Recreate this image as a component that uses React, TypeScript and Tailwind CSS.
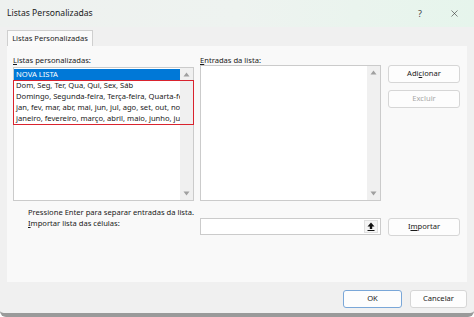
import { X } from "lucide-react";

const lists = [
  "Dom, Seg, Ter, Qua, Qui, Sex, Sáb",
  "Domingo, Segunda-feira, Terça-feira, Quarta-feira, Quinta-feira, Sexta-feira, Sábado",
  "jan, fev, mar, abr, mai, jun, jul, ago, set, out, nov, dez",
  "janeiro, fevereiro, março, abril, maio, junho, julho, agosto",
];

const ScrollBar = () => (
  <div className="flex w-[13px] shrink-0 flex-col items-center justify-between bg-[#f0f0f0] py-[4px]">
    <svg width="7" height="5" viewBox="0 0 7 5">
      <path d="M3.5 0.5 L6.5 4.5 L0.5 4.5 Z" fill="#a0a0a0" />
    </svg>
    <svg width="7" height="5" viewBox="0 0 7 5">
      <path d="M0.5 0.5 L6.5 0.5 L3.5 4.5 Z" fill="#a0a0a0" />
    </svg>
  </div>
);

const Btn = ({ children, disabled, primary }: { children: React.ReactNode; disabled?: boolean; primary?: boolean }) => (
  <div
    className={`flex h-[18px] items-center justify-center rounded-[3px] border bg-[#fdfdfd] text-[7.6px] ${
      primary ? "border-[#7aa7d8]" : "border-[#d6d6d6]"
    } ${disabled ? "text-[#a8a8a8]" : "text-[#1a1a1a]"}`}
  >
    {children}
  </div>
);

export default function App() {
  return (
    <div
      className="flex h-[317px] w-[474px] flex-col overflow-hidden rounded-b-[6px] border-b-[4px] border-[#9a9a9a] bg-[#f0f0f0] text-[#1a1a1a]"
      style={{ fontFamily: '"Segoe UI", "Noto Sans", sans-serif' }}
    >
      {/* title bar */}
      <div className="flex h-[27px] items-center bg-gradient-to-r from-[#eef1ef] via-[#eef3f0] to-[#e6f5ec] pl-[7px] pr-[14px]">
        <span className="text-[8.6px]">Listas Personalizadas</span>
        <span className="ml-auto mr-[27px] text-[9px] text-[#444]">?</span>
        <X className="h-[11px] w-[11px] text-[#333]" strokeWidth={1.3} />
      </div>

      {/* tab */}
      <div className="flex px-[7px] pt-[3px]">
        <div className="flex h-[16px] w-[86px] items-center justify-center border border-b-0 border-[#cfcfcf] bg-[#fafafa] text-[7.6px]">
          Listas Personalizadas
        </div>
      </div>

      {/* panel */}
      <div className="mx-[7px] flex h-[236px] flex-col bg-[#f9f9f9] px-[6px] pt-[9px] text-[7.6px]">
        <div className="flex">
          <div className="flex w-[181px] flex-col">
            <span className="leading-[11px]">
              <u>L</u>istas personalizadas:
            </span>
            <div className="relative mt-[1px] flex h-[134px] border border-[#cbcbcb] bg-white">
              <div className="flex min-w-0 flex-1 flex-col overflow-hidden pt-[1px]">
                <div className="h-[11px] bg-[#0078d7] pl-[2px] leading-[11px] text-white">NOVA LISTA</div>
                {lists.map((l) => (
                  <div key={l} className="h-[11px] overflow-hidden whitespace-nowrap pl-[2px] leading-[11px]">
                    {l}
                  </div>
                ))}
              </div>
              <ScrollBar />
              <div className="absolute -left-[1px] -right-[1px] top-[12px] h-[45px] border-[1.5px] border-[#d9232e]" />
            </div>
          </div>

          <div className="ml-[6px] flex w-[181px] flex-col">
            <span className="leading-[11px]">
              <u>E</u>ntradas da lista:
            </span>
            <div className="mt-[-1px] flex h-[136px] border border-[#cbcbcb] bg-white">
              <div className="flex-1" />
              <ScrollBar />
            </div>
          </div>

          <div className="ml-[7px] mt-[10px] flex w-[72px] flex-col gap-[7px]">
            <Btn>
              Adi<u>c</u>ionar
            </Btn>
            <Btn disabled>Excluir</Btn>
          </div>
        </div>

        <div className="mt-[6px] flex">
          <div className="flex w-[187px] flex-col pl-[15px] leading-[11px]">
            <span className="whitespace-nowrap">Pressione Enter para separar entradas da lista.</span>
            <span>
              <u>I</u>mportar lista das células:
            </span>
          </div>
          <div className="mt-[11px] flex h-[17px] w-[181px] items-center justify-end border border-[#cbcbcb] bg-white pr-[2px]">
            <div className="flex h-[13px] w-[14px] items-center justify-center border border-[#e0e0e0] bg-[#f5f5f5]">
              <svg width="8" height="9" viewBox="0 0 8 9">
                <path d="M4 0.5 L7.5 4.5 L5.2 4.5 L5.2 7 L2.8 7 L2.8 4.5 L0.5 4.5 Z" fill="#111" />
                <rect x="0.5" y="8" width="7" height="1" fill="#111" />
              </svg>
            </div>
          </div>
          <div className="ml-[7px] mt-[11px] w-[72px]">
            <Btn>
              I<u>m</u>portar
            </Btn>
          </div>
        </div>
      </div>

      {/* footer */}
      <div className="flex flex-1 items-start justify-end gap-[8px] pr-[7px] pt-[8px]">
        <div className="w-[59px]">
          <Btn primary>OK</Btn>
        </div>
        <div className="w-[57px]">
          <Btn>Cancelar</Btn>
        </div>
      </div>
    </div>
  );
}
